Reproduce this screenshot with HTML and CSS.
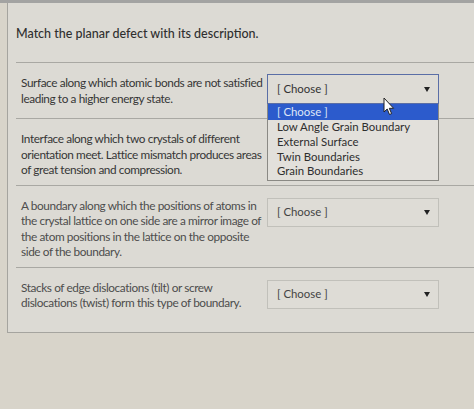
FILE: index.html
```html
<!DOCTYPE html>
<html>
<head>
<meta charset="utf-8">
<link rel="stylesheet" href="styles.css">
</head>
<body>
<div class="topbar"></div>
<div class="card">
  <div class="title">Match the planar defect with its description.</div>
  <div class="rows">
    <div class="row first">
      <div class="q">Surface along which atomic bonds are not satisfied<br>leading to a higher energy state.</div>
      <div class="sel-wrap">
        <div class="sel focus"><span>[ Choose ]</span><i class="arrow"></i></div>
        <ul class="list">
          <li class="hl">[ Choose ]</li>
          <li>Low Angle Grain Boundary</li>
          <li>External Surface</li>
          <li>Twin Boundaries</li>
          <li>Grain Boundaries</li>
        </ul>
        <svg class="cursor" width="12" height="19" viewBox="0 0 12 19"><path d="M1 1 L1 15 L4.2 12 L6.5 17.5 L8.6 16.6 L6.3 11.3 L10.6 11.3 Z" fill="#fff" stroke="#222" stroke-width="1"/></svg>
      </div>
    </div>
    <div class="row">
      <div class="q">Interface along which two crystals of different<br>orientation meet. Lattice mismatch produces areas<br>of great tension and compression.</div>
      <div class="sel-wrap"></div>
    </div>
    <div class="row">
      <div class="q light">A boundary along which the positions of atoms in<br>the crystal lattice on one side are a mirror image of<br>the atom positions in the lattice on the opposite<br>side of the boundary.</div>
      <div class="sel-wrap">
        <div class="sel"><span>[ Choose ]</span><i class="arrow"></i></div>
      </div>
    </div>
    <div class="row last">
      <div class="q light">Stacks of edge dislocations (tilt) or screw<br>dislocations (twist) form this type of boundary.</div>
      <div class="sel-wrap">
        <div class="sel"><span>[ Choose ]</span><i class="arrow"></i></div>
      </div>
    </div>
  </div>
</div>
</body>
</html>
```
FILE: styles.css
```css
html, body {
  margin: 0;
  padding: 0;
}
body {
  background: #d8d4ca;
  font-family: Lato, "Open Sans", sans-serif;
  width: 474px;
  height: 409px;
  overflow: hidden;
}
.topbar {
  height: 3px;
  background: #a3a3a2;
}
.card {
  margin-left: 7px;
  border-left: 1px solid #a5a49f;
  border-bottom: 1px solid #a5a49f;
  background: #dcdad4;
  padding: 22px 0 0 8px;
  height: 307px;
}
.title {
  font-size: 12.5px;
  line-height: 18px;
  color: #2f2f2f;
  font-weight: 500;
  margin-bottom: 19px;
}
.row {
  display: flex;
  border-top: 1px solid #a9a8a3;
  padding: 12px 0 7px 5px;
}
.row.first {
  padding-bottom: 12px;
}
.row.last {
  padding-bottom: 0;
}
.q {
  width: 246px;
  font-size: 11.8px;
  line-height: 15.5px;
  letter-spacing: -0.4px;
  color: #363636;
  white-space: nowrap;
}
.q.light {
  color: #4d4d4d;
}
.sel-wrap {
  position: relative;
  width: 172px;
}
.sel {
  height: 27px;
  border: 1px solid #c1c0ba;
  background: #dedcd6;
  display: flex;
  align-items: center;
  padding: 0 8px 0 9px;
  font-size: 11.4px;
  color: #444;
  justify-content: space-between;
}
.sel.focus {
  height: 28px;
  border: 1px solid #5a6ea6;
  margin-top: -1px;
  color: #333;
}
.sel span {
  margin-top: -2px;
}
.arrow {
  width: 0;
  height: 0;
  border-left: 3px solid transparent;
  border-right: 3px solid transparent;
  border-top: 5px solid #222;
}
.list {
  position: absolute;
  top: 29px;
  left: 0;
  width: 170px;
  margin: 0;
  padding: 0 0 1px 0;
  list-style: none;
  background: #e2e0db;
  border: 1px solid #8a8984;
  border-top: none;
  z-index: 2;
  font-size: 11.4px;
  color: #2e2e2e;
}
.list li {
  line-height: 14.8px;
  padding-left: 9px;
}
.list li.hl {
  background: #2c5bcc;
  color: #dfe6f7;
  line-height: 16px;
}
.cursor {
  position: absolute;
  left: 116px;
  top: 22px;
  z-index: 3;
}
```
